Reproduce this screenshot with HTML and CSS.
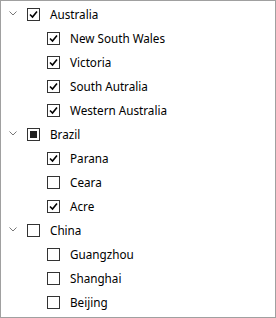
FILE: index.html
```html
<!DOCTYPE html>
<html lang="en">
<head>
  <meta charset="UTF-8" />
  <title>Tree</title>
  <link rel="stylesheet" href="styles.css">
</head>
<body>
  <div class="arvore">

    <!-- Australia -->
    <div class="no">
      <svg class="seta" width="8" height="5" viewBox="0 0 8 5"><path d="M0.5 0.5 L4 4 L7.5 0.5" fill="none" stroke="#777" stroke-width="1"/></svg>
      <span class="caixa marcada"></span>
      <span class="rotulo">Australia</span>
    </div>
    <div class="no filho"><span class="caixa marcada"></span><span class="rotulo">New South Wales</span></div>
    <div class="no filho"><span class="caixa marcada"></span><span class="rotulo">Victoria</span></div>
    <div class="no filho"><span class="caixa marcada"></span><span class="rotulo">South Autralia</span></div>
    <div class="no filho"><span class="caixa marcada"></span><span class="rotulo">Western Australia</span></div>

    <!-- Brazil -->
    <div class="no">
      <svg class="seta" width="8" height="5" viewBox="0 0 8 5"><path d="M0.5 0.5 L4 4 L7.5 0.5" fill="none" stroke="#777" stroke-width="1"/></svg>
      <span class="caixa parcial"></span>
      <span class="rotulo">Brazil</span>
    </div>
    <div class="no filho"><span class="caixa marcada"></span><span class="rotulo">Parana</span></div>
    <div class="no filho"><span class="caixa"></span><span class="rotulo">Ceara</span></div>
    <div class="no filho"><span class="caixa marcada"></span><span class="rotulo">Acre</span></div>

    <!-- China -->
    <div class="no">
      <svg class="seta" width="8" height="5" viewBox="0 0 8 5"><path d="M0.5 0.5 L4 4 L7.5 0.5" fill="none" stroke="#777" stroke-width="1"/></svg>
      <span class="caixa"></span>
      <span class="rotulo">China</span>
    </div>
    <div class="no filho"><span class="caixa"></span><span class="rotulo">Guangzhou</span></div>
    <div class="no filho"><span class="caixa"></span><span class="rotulo">Shanghai</span></div>
    <div class="no filho"><span class="caixa"></span><span class="rotulo">Beijing</span></div>

  </div>
</body>
</html>
```

FILE: styles.css
```css
body {
  margin: 0;
  padding: 0;
  background: white;
  font-family: "Noto Sans", "Open Sans", sans-serif;
  font-size: 11.7px;
  color: #000;
}

.arvore {
  box-sizing: border-box;
  width: 276px;
  height: 318px;
  border: 1px solid #a0a0a0;
  padding-top: 1px;
}

.no {
  display: flex;
  align-items: center;
  height: 24px;
  padding-left: 8px;
}

.no.filho {
  padding-left: 46px;
}

.seta {
  width: 8px;
  height: 5px;
  margin-right: 10px;
  margin-top: -1px;
}

.caixa {
  box-sizing: border-box;
  width: 13px;
  height: 13px;
  border: 1px solid #333;
  background: white;
  position: relative;
  flex: none;
}

.caixa.marcada::after {
  content: "";
  position: absolute;
  left: 1px;
  top: 1px;
  width: 9px;
  height: 9px;
  background: no-repeat center / 9px 9px url("data:image/svg+xml;utf8,<svg xmlns='http://www.w3.org/2000/svg' viewBox='0 0 9 9'><path d='M1 4.5 L3.5 7 L8 1.5' fill='none' stroke='black' stroke-width='1.6'/></svg>");
}

.caixa.parcial::after {
  content: "";
  position: absolute;
  left: 2px;
  top: 2px;
  width: 7px;
  height: 7px;
  background: #222;
}

.rotulo {
  margin-left: 10px;
  line-height: 16px;
}
```
